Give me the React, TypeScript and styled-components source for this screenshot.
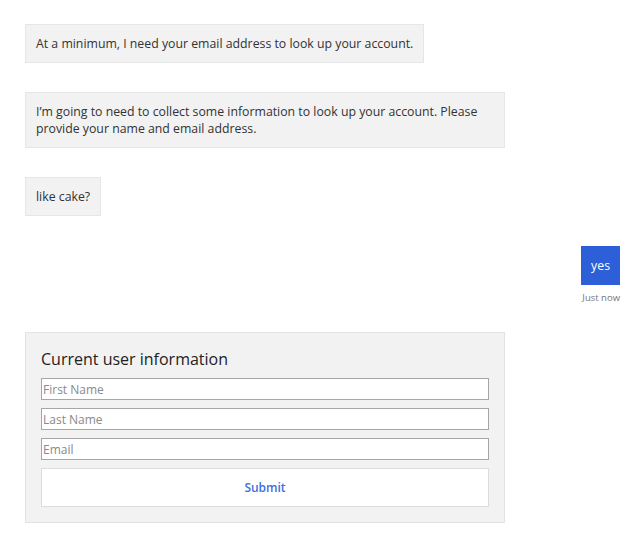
import React from 'react'
import styled, { createGlobalStyle } from 'styled-components'

const GlobalStyle = createGlobalStyle`
  body {
    margin: 0;
    background: #ffffff;
    font-family: 'Open Sans', 'Noto Sans', sans-serif;
  }
`

const Transcript = styled.div`
  display: flex;
  flex-direction: column;
  padding: 24px 11px 20px 25px;
`

const Row = styled.div<{ $fromUser?: boolean }>`
  display: flex;
  flex-direction: column;
  align-items: ${({ $fromUser }) => ($fromUser ? 'flex-end' : 'flex-start')};
  margin-top: ${({ $fromUser }) => ($fromUser ? '1px' : '0')};
  margin-bottom: ${({ $fromUser }) => ($fromUser ? '28px' : '29px')};
`

const Bubble = styled.div<{ $fromUser?: boolean }>`
  box-sizing: border-box;
  max-width: 480px;
  padding: ${({ $fromUser }) => ($fromUser ? '10px 9px' : '10px')};
  font-size: 12.3px;
  line-height: 17px;
  border: 1px solid ${({ $fromUser }) => ($fromUser ? '#2d5fd8' : '#e6e6e6')};
  background: ${({ $fromUser }) => ($fromUser ? '#2d5fd8' : '#f2f2f2')};
  color: ${({ $fromUser }) => ($fromUser ? '#ffffff' : '#333333')};
`

const Timestamp = styled.div`
  margin-top: 7px;
  font-size: 9.5px;
  color: #767676;
  line-height: 12px;
`

const Card = styled.form`
  box-sizing: border-box;
  width: 480px;
  display: flex;
  flex-direction: column;
  gap: 8px;
  padding: 15px 15px 15px;
  background: #f2f2f2;
  border: 1px solid #e3e3e3;
`

const CardTitle = styled.div`
  font-size: 16px;
  line-height: 22px;
  color: #222222;
`

const Field = styled.input`
  box-sizing: border-box;
  height: 22px;
  width: 100%;
  margin: 0;
  padding: 0 1px;
  border: 1px solid #a6a6a6;
  background: #ffffff;
  font-family: inherit;
  font-size: 12px;
  color: #333333;
  outline: none;
  &::placeholder {
    color: #8a8a8a;
  }
`

const SubmitButton = styled.button`
  box-sizing: border-box;
  height: 39px;
  width: 100%;
  border: 1px solid #dcdcdc;
  background: #ffffff;
  color: #3a6fe3;
  font-family: inherit;
  font-size: 12px;
  font-weight: 600;
  cursor: pointer;
`

const botMessages = [
  'At a minimum, I need your email address to look up your account.',
  "I’m going to need to collect some information to look up your account. Please provide your name and email address.",
  'like cake?',
]

export default function App() {
  return (
    <>
      <GlobalStyle />
      <Transcript>
        {botMessages.map((text, i) => (
          <Row key={i}>
            <Bubble>{text}</Bubble>
          </Row>
        ))}
        <Row $fromUser>
          <Bubble $fromUser>yes</Bubble>
          <Timestamp>Just now</Timestamp>
        </Row>
        <Card onSubmit={(e) => e.preventDefault()}>
          <CardTitle>Current user information</CardTitle>
          <Field placeholder="First Name" />
          <Field placeholder="Last Name" />
          <Field placeholder="Email" />
          <SubmitButton type="submit">Submit</SubmitButton>
        </Card>
      </Transcript>
    </>
  )
}
